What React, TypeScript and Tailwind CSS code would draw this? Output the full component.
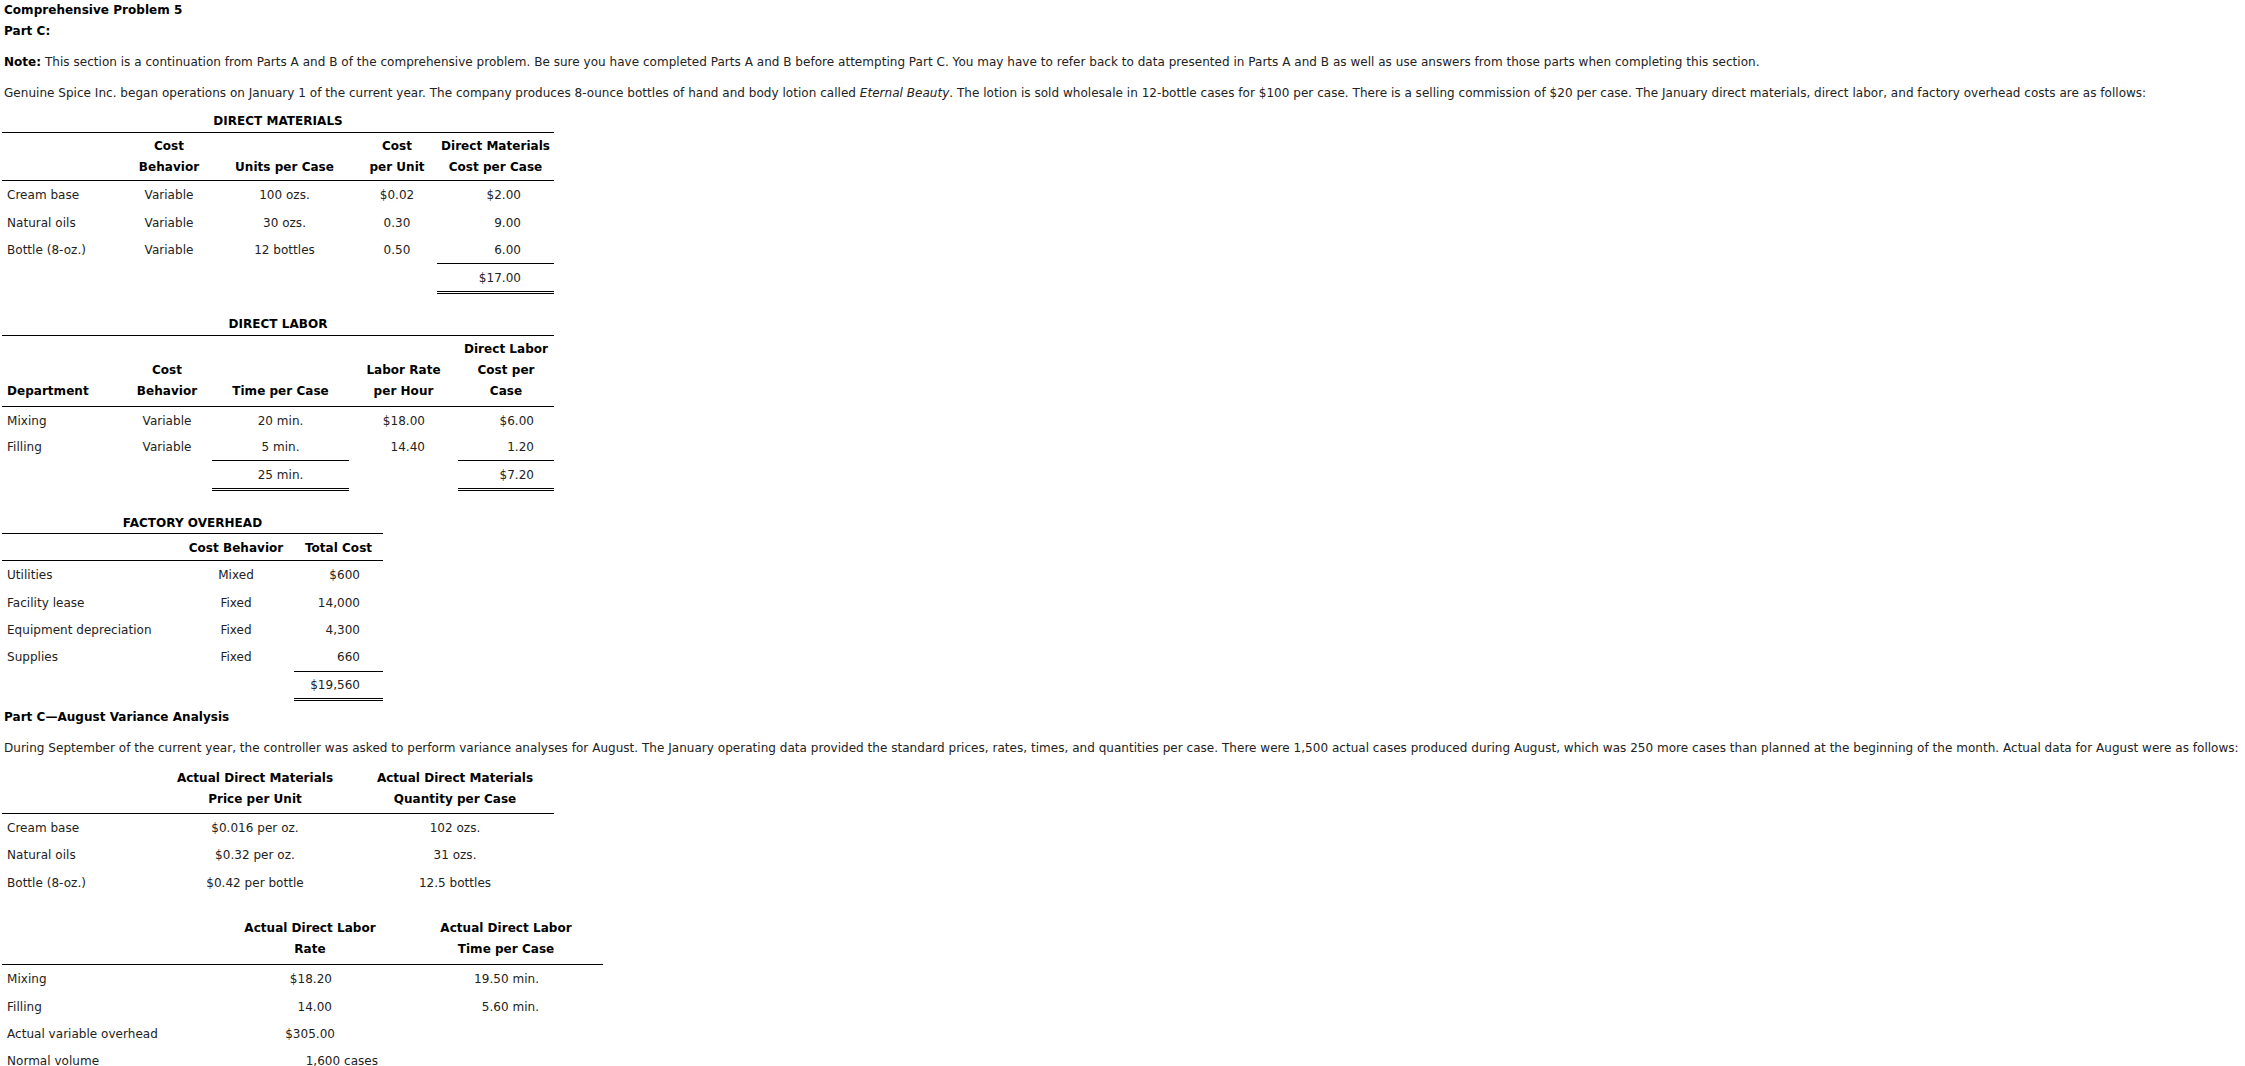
import React from 'react';

// Comprehensive Problem 5 — Part C data sheet

const FONT = "font-['Verdana','DejaVu_Sans',sans-serif]";

function Heading({ children, className = '' }: { children: React.ReactNode; className?: string }) {
  return <div className={`h-[18px] leading-[18px] text-center font-bold text-black ${className}`}>{children}</div>;
}

function DirectMaterials() {
  const rows = [
    { name: 'Cream base', units: '100 ozs.', cost: '$0.02', total: '$2.00', h: 'h-[28px]' },
    { name: 'Natural oils', units: '30 ozs.', cost: '0.30', total: '9.00', h: 'h-[27px]' },
    { name: 'Bottle (8-oz.)', units: '12 bottles', cost: '0.50', total: '6.00', h: 'h-[27px]' },
  ];
  return (
    <div className="w-[552px] mt-[10px]">
      <Heading>DIRECT MATERIALS</Heading>
      <div className="mt-[2px] grid grid-cols-[124px_86px_145px_80px_117px] items-end border-t border-b border-black pt-[3px] pb-[2px] leading-[21px] font-bold text-black text-center">
        <div />
        <div>Cost<br />Behavior</div>
        <div>Units per Case</div>
        <div>Cost<br />per Unit</div>
        <div>Direct Materials<br />Cost per Case</div>
      </div>
      {rows.map(r => (
        <div key={r.name} className={`grid grid-cols-[124px_86px_145px_80px_117px] items-center ${r.h}`}>
          <div className="pl-[5px]">{r.name}</div>
          <div className="text-center">Variable</div>
          <div className="text-center">{r.units}</div>
          <div className="text-center">{r.cost}</div>
          <div className="text-right pr-[33px]">{r.total}</div>
        </div>
      ))}
      <div className="grid grid-cols-[124px_86px_145px_80px_117px]">
        <div className="col-start-5 h-[31px] flex items-center justify-end pr-[33px] border-t border-b-[3px] border-double border-black">
          $17.00
        </div>
      </div>
    </div>
  );
}

function DirectLabor() {
  const rows = [
    { name: 'Mixing', time: '20 min.', rate: '$18.00', cost: '$6.00', h: 'h-[27px]' },
    { name: 'Filling', time: '5 min.', rate: '14.40', cost: '1.20', h: 'h-[26px]' },
  ];
  return (
    <div className="w-[552px] mt-[21px]">
      <Heading>DIRECT LABOR</Heading>
      <div className="mt-[2px] grid grid-cols-[120px_90px_137px_109px_96px] items-end border-t border-b border-black pt-[3px] pb-[4px] leading-[21px] font-bold text-black text-center">
        <div className="text-left pl-[5px]">Department</div>
        <div>Cost<br />Behavior</div>
        <div>Time per Case</div>
        <div>Labor Rate<br />per Hour</div>
        <div>Direct Labor<br />Cost per<br />Case</div>
      </div>
      {rows.map(r => (
        <div key={r.name} className={`grid grid-cols-[120px_90px_137px_109px_96px] items-center ${r.h}`}>
          <div className="pl-[5px]">{r.name}</div>
          <div className="text-center">Variable</div>
          <div className="text-center">{r.time}</div>
          <div className="text-right pr-[33px]">{r.rate}</div>
          <div className="text-right pr-[20px]">{r.cost}</div>
        </div>
      ))}
      <div className="grid grid-cols-[120px_90px_137px_109px_96px]">
        <div className="col-start-3 h-[31px] flex items-center justify-center border-t border-b-[3px] border-double border-black">
          25 min.
        </div>
        <div className="col-start-5 h-[31px] flex items-center justify-end pr-[20px] border-t border-b-[3px] border-double border-black">
          $7.20
        </div>
      </div>
    </div>
  );
}

function FactoryOverhead() {
  const rows = [
    { name: 'Utilities', kind: 'Mixed', cost: '$600', h: 'h-[28px]' },
    { name: 'Facility lease', kind: 'Fixed', cost: '14,000', h: 'h-[27px]' },
    { name: 'Equipment depreciation', kind: 'Fixed', cost: '4,300', h: 'h-[27px]' },
    { name: 'Supplies', kind: 'Fixed', cost: '660', h: 'h-[28px]' },
  ];
  return (
    <div className="w-[381px] mt-[23px]">
      <Heading>FACTORY OVERHEAD</Heading>
      <div className="mt-[1px] grid grid-cols-[176px_116px_89px] border-t border-b border-black pt-[4px] pb-[1px] leading-[21px] font-bold text-black text-center">
        <div />
        <div>Cost Behavior</div>
        <div>Total Cost</div>
      </div>
      {rows.map(r => (
        <div key={r.name} className={`grid grid-cols-[176px_116px_89px] items-center ${r.h}`}>
          <div className="pl-[5px]">{r.name}</div>
          <div className="text-center">{r.kind}</div>
          <div className="text-right pr-[23px]">{r.cost}</div>
        </div>
      ))}
      <div className="grid grid-cols-[176px_116px_89px]">
        <div className="col-start-3 h-[30px] flex items-center justify-end pr-[23px] border-t border-b-[3px] border-double border-black">
          $19,560
        </div>
      </div>
    </div>
  );
}

function ActualMaterials() {
  const rows = [
    { name: 'Cream base', price: '$0.016 per oz.', qty: '102 ozs.', h: 'h-[27px]' },
    { name: 'Natural oils', price: '$0.32 per oz.', qty: '31 ozs.', h: 'h-[28px]' },
    { name: 'Bottle (8-oz.)', price: '$0.42 per bottle', qty: '12.5 bottles', h: 'h-[27px]' },
  ];
  return (
    <div className="w-[552px] mt-[11px]">
      <div className="grid grid-cols-[152px_202px_198px] items-end border-b border-black pb-[3px] leading-[21px] font-bold text-black text-center">
        <div />
        <div>Actual Direct Materials<br />Price per Unit</div>
        <div>Actual Direct Materials<br />Quantity per Case</div>
      </div>
      {rows.map(r => (
        <div key={r.name} className={`grid grid-cols-[152px_202px_198px] items-center ${r.h}`}>
          <div className="pl-[5px]">{r.name}</div>
          <div className="text-center">{r.price}</div>
          <div className="text-center">{r.qty}</div>
        </div>
      ))}
    </div>
  );
}

function ActualLabor() {
  const rows = [
    { name: 'Mixing', rate: '$18.20', ratePad: 'pr-[77px]', time: '19.50 min.', h: 'h-[28px]' },
    { name: 'Filling', rate: '14.00', ratePad: 'pr-[77px]', time: '5.60 min.', h: 'h-[27px]' },
    { name: 'Actual variable overhead', rate: '$305.00', ratePad: 'pr-[74px]', time: '', h: 'h-[27px]' },
    { name: 'Normal volume', rate: '1,600 cases', ratePad: 'pr-[31px]', time: '', h: 'h-[27px]' },
  ];
  return (
    <div className="w-[601px] mt-[22px]">
      <div className="grid grid-cols-[209px_198px_194px] items-end border-b border-black pb-[4px] leading-[21px] font-bold text-black text-center">
        <div />
        <div>Actual Direct Labor<br />Rate</div>
        <div>Actual Direct Labor<br />Time per Case</div>
      </div>
      {rows.map(r => (
        <div key={r.name} className={`grid grid-cols-[209px_198px_194px] items-center ${r.h}`}>
          <div className="pl-[5px]">{r.name}</div>
          <div className={`text-right ${r.ratePad}`}>{r.rate}</div>
          <div className="text-right pr-[64px]">{r.time}</div>
        </div>
      ))}
    </div>
  );
}

export default function App() {
  return (
    <div className={`${FONT} text-[12px] tracking-[0.03px] text-[#222] bg-white w-[2245px] h-[1066px] overflow-hidden pl-[2px] pt-[1px]`}>
      <div className="pl-[2px] leading-[18px] font-bold text-black">Comprehensive Problem 5</div>
      <div className="pl-[2px] mt-[3px] leading-[18px] font-bold text-black">Part C:</div>

      <p className="pl-[2px] mt-[13px] leading-[18px] whitespace-nowrap">
        <b className="text-black">Note:</b> This section is a continuation from Parts A and B of the comprehensive problem. Be sure you have completed Parts A and B before attempting Part C. You may have to refer back to data presented in Parts A and B as well as use answers from those parts when completing this section.
      </p>
      <p className="pl-[2px] mt-[13px] leading-[18px] whitespace-nowrap">
        Genuine Spice Inc. began operations on January 1 of the current year. The company produces 8-ounce bottles of hand and body lotion called <i>Eternal Beauty</i>. The lotion is sold wholesale in 12-bottle cases for $100 per case. There is a selling commission of $20 per case. The January direct materials, direct labor, and factory overhead costs are as follows:
      </p>

      <DirectMaterials />
      <DirectLabor />
      <FactoryOverhead />

      <div className="pl-[2px] mt-[7px] leading-[18px] font-bold text-black">Part C—August Variance Analysis</div>
      <p className="pl-[2px] mt-[13px] leading-[18px] whitespace-nowrap">
        During September of the current year, the controller was asked to perform variance analyses for August. The January operating data provided the standard prices, rates, times, and quantities per case. There were 1,500 actual cases produced during August, which was 250 more cases than planned at the beginning of the month. Actual data for August were as follows:
      </p>

      <ActualMaterials />
      <ActualLabor />
    </div>
  );
}
